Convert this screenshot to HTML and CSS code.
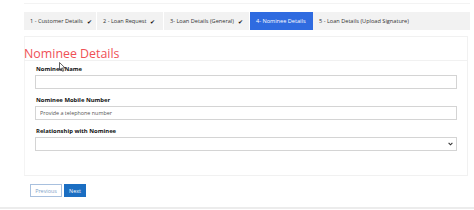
FILE: index.html
```html
<!DOCTYPE html>
<html lang="en">
<head>
    <meta charset="UTF-8">
    <title>Nominee Details</title>
    <link rel="stylesheet" href="styles.css">
</head>
<body>
    <div class="page">
        <div class="steps">
            <div class="step step-1">1 - Customer Details <span class="tick">&#10004;</span></div>
            <div class="step step-2">2 - Loan Request <span class="tick">&#10004;</span></div>
            <div class="step step-3">3- Loan Details (General) <span class="tick">&#10004;</span></div>
            <div class="step step-4 active">4- Nominee Details</div>
            <div class="step step-5">5 - Loan Details (Upload Signature)</div>
        </div>

        <div class="card">
            <h2 class="title">Nominee Details</h2>
            <div class="fields">
                <div class="field">
                    <label for="nomineeName">Nominee Name</label>
                    <input type="text" id="nomineeName">
                </div>
                <div class="field">
                    <label for="nomineeMobile">Nominee Mobile Number</label>
                    <input type="text" id="nomineeMobile" placeholder="Provide a telephone number">
                </div>
                <div class="field">
                    <label for="relationship">Relationship with Nominee</label>
                    <div class="select">
                        <select id="relationship">
                            <option value=""></option>
                        </select>
                        <svg class="chevron" width="5" height="4" viewBox="0 0 5 4">
                            <path d="M0.6 0.8 L2.5 2.8 L4.4 0.8" fill="none" stroke="#333" stroke-width="1.1"/>
                        </svg>
                    </div>
                </div>
            </div>
            <!-- mouse pointer from the capture -->
            <svg class="cursor" width="7" height="10" viewBox="0 0 7 10">
                <path d="M0.5 0.5 L0.5 8 L2.3 6.3 L3.6 9.3 L4.8 8.8 L3.5 5.9 L6 5.9 Z" fill="#fff" stroke="#222" stroke-width="0.7"/>
            </svg>
        </div>

        <div class="actions">
            <button class="btn btn-prev">Previous</button>
            <button class="btn btn-next">Next</button>
        </div>
    </div>
    <div class="footer-rule"></div>
</body>
</html>
```

FILE: styles.css
```css
body {
    margin: 0;
    background: #fff;
    font-family: "Open Sans", "Noto Sans", sans-serif;
    color: #222;
}
.page {
    margin: 3px 4px 0 24px;
    border-top: 1px solid #f3f3f3;
    padding-top: 8px;
}
.steps {
    display: flex;
    height: 18px;
    background: #f2f2f2;
    font-size: 5.6px;
    color: #333;
}
.step {
    display: flex;
    align-items: center;
    box-sizing: border-box;
    padding: 0 5px 0 6px;
    border-right: 1px solid #fff;
    white-space: nowrap;
}
.step-1 { width: 73px; }
.step-2 { width: 67px; }
.step-3 { width: 86px; }
.step-4 { width: 63px; }
.step-5 { border-right: none; }
.tick {
    margin-left: 4px;
    font-size: 6.4px;
    color: #111;
}
.step.active {
    background: #2f6be0;
    color: #fff;
    border-right: none;
}
.card {
    position: relative;
    margin-top: 6px;
    margin-right: 2px;
    border: 1px solid #f1f1f1;
    border-left-color: #f4f4f4;
}
.title {
    margin: 0 0 0 -1px;
    height: 23px;
    line-height: 34px;
    font-size: 12.4px;
    font-weight: normal;
    color: #ef5156;
    border-bottom: 1px solid #f1f1f1;
}
.fields {
    padding: 3px 10px 24px 10px;
}
.field {
    margin-bottom: 6px;
}
.field:last-child {
    margin-bottom: 0;
}
label {
    display: block;
    font-size: 5.9px;
    font-weight: bold;
    line-height: 10px;
    margin-bottom: 1px;
    padding-left: 1px;
    color: #111;
}
input[type=text], select {
    display: block;
    box-sizing: border-box;
    width: 100%;
    height: 14px;
    margin: 0;
    padding: 0 4px;
    border: 1px solid #d4d4d4;
    border-radius: 0;
    background: #fff;
    font-family: inherit;
    font-size: 5.4px;
    color: #333;
    outline: none;
}
input::placeholder {
    color: #555;
}
.select {
    position: relative;
}
select {
    appearance: none;
    -webkit-appearance: none;
}
.chevron {
    position: absolute;
    right: 4px;
    top: 5px;
}
.cursor {
    position: absolute;
    left: 34px;
    top: 25px;
}
.actions {
    display: flex;
    gap: 2px;
    padding: 8px 0 0 6px;
}
.btn {
    height: 13px;
    padding: 0;
    font-family: inherit;
    font-size: 5.4px;
    border-radius: 0;
    cursor: pointer;
}
.btn-prev {
    width: 32px;
    background: #fff;
    color: #7f9fc9;
    border: 1px solid #a8c0de;
}
.btn-next {
    width: 22px;
    background: #1b6ec2;
    color: #fff;
    border: 1px solid #1b6ec2;
}
.footer-rule {
    margin-top: 10px;
    height: 2px;
    background: #ececec;
}
```
